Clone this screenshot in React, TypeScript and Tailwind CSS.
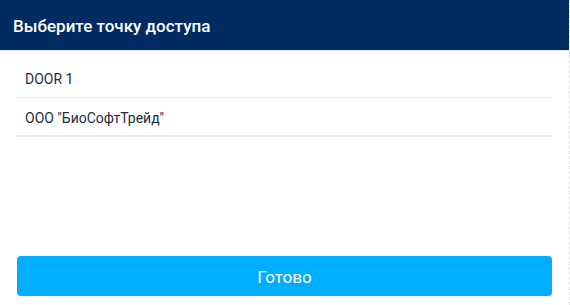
const points = ['DOOR 1', 'ООО "БиоСофтТрейд"']

export default function App() {
  return (
    <div className="flex h-[305px] w-[570px] flex-col border-r border-dashed border-[#dde2e8] bg-white font-['Roboto',sans-serif]">
      <div className="flex h-[50px] shrink-0 items-center bg-[#022b61] px-[13px] pt-[3px]">
        <h1 className="text-[17px] font-medium text-white">Выберите точку доступа</h1>
      </div>
      <div className="h-px bg-[#e4e9ef]" />

      <div className="px-[17px] pt-[8px]">
        {points.map((p, i) => (
          <div
            key={p}
            className={
              'flex h-[39px] items-center px-2 pt-[3px] text-[14px] text-[#1d2b3c] ' +
              (i === 0 ? 'border-b border-dotted border-[#d9dde2]' : 'border-b-2 border-[#e8ecf0]')
            }
          >
            {p}
          </div>
        ))}
      </div>

      <div className="flex-1" />

      <div className="px-[17px] pb-[9px]">
        <button className="h-[40px] w-full rounded-[4px] bg-[#00aeff] pt-[3px] text-[17px] text-white">
          Готово
        </button>
      </div>
    </div>
  )
}
